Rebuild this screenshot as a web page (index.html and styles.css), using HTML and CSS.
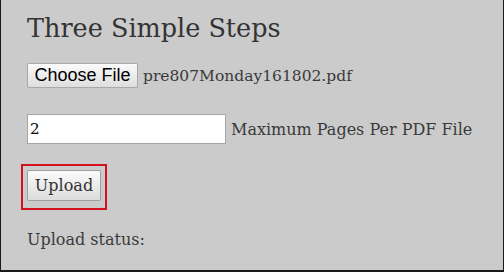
FILE: index.html
```html
<!DOCTYPE html>
<html>
<head>
<meta charset="utf-8">
<link rel="stylesheet" href="styles.css">
</head>
<body>
<div class="page">
  <h1 class="title">Three Simple Steps</h1>
  <div class="row file-row">
    <span class="file-btn">Choose File</span>
    <span class="file-name">pre807Monday161802.pdf</span>
  </div>
  <div class="row pages-row">
    <span class="text-input">2</span>
    <span class="label">Maximum Pages Per PDF File</span>
  </div>
  <div class="row upload-row">
    <div class="highlight">
      <span class="upload-btn">Upload</span>
    </div>
  </div>
  <div class="row status-row">Upload status:</div>
</div>
</body>
</html>
```
FILE: styles.css
```css
html, body {
  margin: 0;
  padding: 0;
  background: #cbcbcb;
}
.page {
  box-sizing: border-box;
  width: 504px;
  height: 272px;
  border-left: 1px solid #1a1a1a;
  border-right: 1px solid #1a1a1a;
  border-bottom: 2px solid #1a1a1a;
  background: #cbcbcb;
  padding: 0 0 0 26px;
  font-family: "DejaVu Serif", Georgia, serif;
  color: #3a3a3a;
  overflow: hidden;
}
.title {
  margin: 0;
  padding-top: 8px;
  height: 63px;
  box-sizing: border-box;
  font-weight: normal;
  font-size: 25.5px;
  line-height: 40px;
  color: #333;
}
.row {
  display: flex;
  align-items: center;
}
.file-row {
  height: 25px;
  gap: 5px;
}
.file-btn {
  box-sizing: border-box;
  height: 25px;
  width: 111px;
  display: flex;
  align-items: center;
  justify-content: center;
  font-family: "Liberation Sans", Arial, sans-serif;
  font-size: 18px;
  color: #000;
  border: 1px solid #a9a9a9;
  border-radius: 2px;
  background: linear-gradient(#fbfbfb, #dedede);
}
.file-name {
  font-size: 15.5px;
}
.pages-row {
  margin-top: 26px;
  height: 30px;
  gap: 5px;
}
.text-input {
  box-sizing: border-box;
  width: 199px;
  height: 30px;
  background: #fff;
  border: 1px solid #a6a6a6;
  padding-left: 2px;
  font-size: 15px;
  color: #000;
  display: flex;
  align-items: center;
}
.label {
  font-size: 16px;
}
.upload-row {
  margin-top: 20px;
  margin-left: -6px;
}
.highlight {
  box-sizing: border-box;
  width: 86px;
  height: 46px;
  border: 2px solid #d0111c;
  padding: 4px 0 0 4px;
}
.upload-btn {
  box-sizing: border-box;
  display: flex;
  align-items: center;
  justify-content: center;
  width: 74px;
  height: 31px;
  font-size: 16px;
  color: #333;
  border: 1px solid #a0a0a0;
  border-radius: 2px;
  background: linear-gradient(#fbfbfb, #dcdcdc);
}
.status-row {
  margin-top: 19px;
  font-size: 16px;
  line-height: 22px;
}
```
